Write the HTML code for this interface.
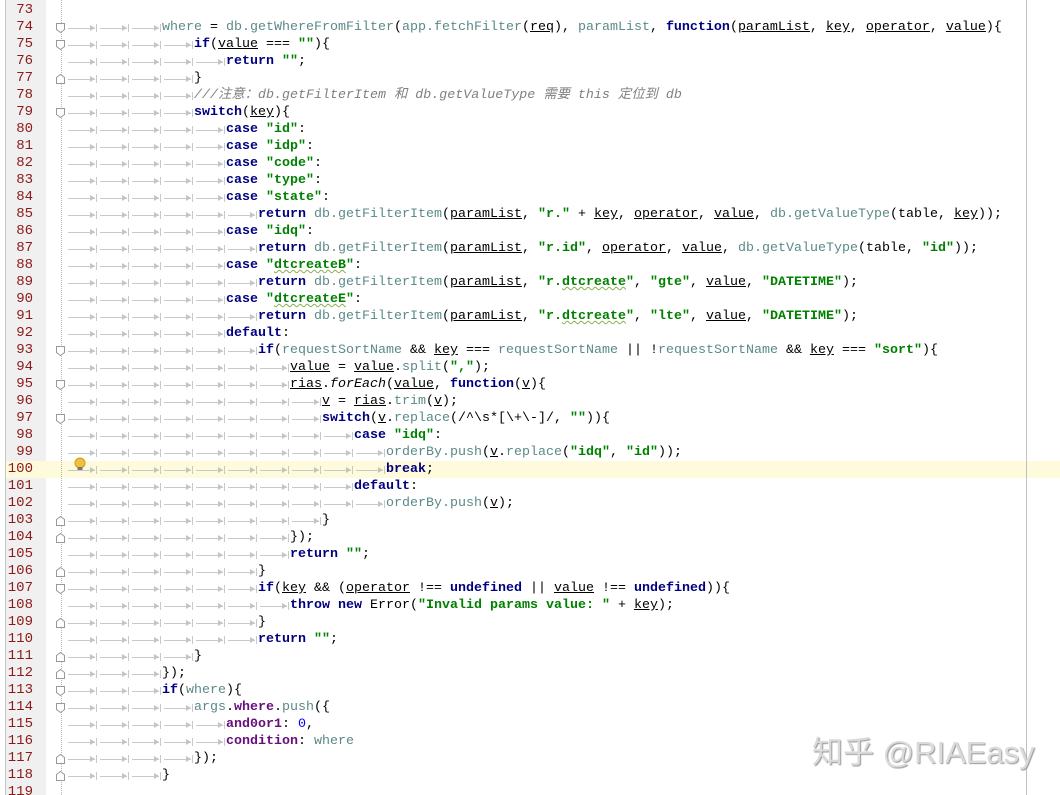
<!DOCTYPE html>
<html><head><meta charset="utf-8"><style>
html,body{margin:0;padding:0;background:#fff;width:1060px;height:795px;overflow:hidden;position:relative;font-family:"Liberation Mono","Noto Sans CJK SC",monospace;}
#gut{position:absolute;left:5px;top:0;width:40px;height:795px;background:#f0f0f0;border-left:1px solid #c8c8c8;}
#dot{position:absolute;left:61px;top:0;height:795px;border-left:1px dotted #b8b8b8;}
#rm{position:absolute;left:1026px;top:0;height:795px;border-left:1px solid #c0c0c0;}
.hl{position:absolute;left:6px;width:1054px;height:17px;background:#fdfbdc;}
.ln{position:absolute;left:4px;width:29px;text-align:right;font-size:14px;line-height:17px;color:#8c1a1a;margin-top:2px;}
.code{position:absolute;left:66px;font-size:13.33px;line-height:17px;white-space:pre;color:#000;margin-top:2px;}
.t{display:inline-block;width:32px;height:17px;vertical-align:top;position:relative;}
.t:before{content:"";position:absolute;left:2px;right:3px;top:9px;border-top:1px solid #c8c8c8;}
.t:after{content:"";position:absolute;right:1px;top:5px;height:8px;border-left:1px solid #c8c8c8;}
.t i{position:absolute;right:3px;top:6px;width:0;height:0;border-top:3px solid transparent;border-bottom:3px solid transparent;border-left:5px solid #c4c4c4;}
.k{color:#000080;font-weight:bold;}
.s{color:#008000;font-weight:bold;}
.g{color:#5b8a88;}
.p{color:#660e7a;font-weight:bold;}
.n{color:#0000ff;}
.c1{color:#808080;font-style:italic;}
.u{text-decoration:underline;}
.w{text-decoration:underline wavy #8ab04f;text-decoration-thickness:1px;}
.it{font-style:italic;}
#wm{position:absolute;left:812px;top:727px;font-family:"Liberation Sans","Noto Sans CJK SC",sans-serif;font-size:31px;color:#dadada;text-shadow:1px 1px 1px #999;}
</style></head><body>
<div id="gut"></div>
<div class="hl" style="top:461px"></div>
<div id="dot"></div>
<div id="rm"></div>
<div id="wm">知乎 @RIAEasy</div>
<svg style="position:absolute;left:73px;top:457px" width="14" height="17" viewBox="0 0 14 17"><circle cx="7" cy="6" r="5" fill="#f0c040" stroke="#d09a20"/><rect x="4.5" y="10" width="5" height="4" fill="#777"/></svg>

<div class="ln" style="top:0px">73</div>
<div class="ln" style="top:17px">74</div><div class="code" style="top:17px"><b class="t"><i></i></b><b class="t"><i></i></b><b class="t"><i></i></b><span class="g">where</span> = <span class="g">db.getWhereFromFilter</span>(<span class="g">app.fetchFilter</span>(<span class="u">req</span>), <span class="g">paramList</span>, <span class="k">function</span>(<span class="u">paramList</span>, <span class="u">key</span>, <span class="u">operator</span>, <span class="u">value</span>){</div>
<div class="ln" style="top:34px">75</div><div class="code" style="top:34px"><b class="t"><i></i></b><b class="t"><i></i></b><b class="t"><i></i></b><b class="t"><i></i></b><span class="k">if</span>(<span class="u">value</span> === <span class="s">""</span>){</div>
<div class="ln" style="top:51px">76</div><div class="code" style="top:51px"><b class="t"><i></i></b><b class="t"><i></i></b><b class="t"><i></i></b><b class="t"><i></i></b><b class="t"><i></i></b><span class="k">return</span> <span class="s">""</span>;</div>
<div class="ln" style="top:68px">77</div><div class="code" style="top:68px"><b class="t"><i></i></b><b class="t"><i></i></b><b class="t"><i></i></b><b class="t"><i></i></b>}</div>
<div class="ln" style="top:85px">78</div><div class="code" style="top:85px"><b class="t"><i></i></b><b class="t"><i></i></b><b class="t"><i></i></b><b class="t"><i></i></b><span class="c1">///注意：db.getFilterItem 和 db.getValueType 需要 this 定位到 db</span></div>
<div class="ln" style="top:102px">79</div><div class="code" style="top:102px"><b class="t"><i></i></b><b class="t"><i></i></b><b class="t"><i></i></b><b class="t"><i></i></b><span class="k">switch</span>(<span class="u">key</span>){</div>
<div class="ln" style="top:119px">80</div><div class="code" style="top:119px"><b class="t"><i></i></b><b class="t"><i></i></b><b class="t"><i></i></b><b class="t"><i></i></b><b class="t"><i></i></b><span class="k">case</span> <span class="s">"id"</span>:</div>
<div class="ln" style="top:136px">81</div><div class="code" style="top:136px"><b class="t"><i></i></b><b class="t"><i></i></b><b class="t"><i></i></b><b class="t"><i></i></b><b class="t"><i></i></b><span class="k">case</span> <span class="s">"idp"</span>:</div>
<div class="ln" style="top:153px">82</div><div class="code" style="top:153px"><b class="t"><i></i></b><b class="t"><i></i></b><b class="t"><i></i></b><b class="t"><i></i></b><b class="t"><i></i></b><span class="k">case</span> <span class="s">"code"</span>:</div>
<div class="ln" style="top:170px">83</div><div class="code" style="top:170px"><b class="t"><i></i></b><b class="t"><i></i></b><b class="t"><i></i></b><b class="t"><i></i></b><b class="t"><i></i></b><span class="k">case</span> <span class="s">"type"</span>:</div>
<div class="ln" style="top:187px">84</div><div class="code" style="top:187px"><b class="t"><i></i></b><b class="t"><i></i></b><b class="t"><i></i></b><b class="t"><i></i></b><b class="t"><i></i></b><span class="k">case</span> <span class="s">"state"</span>:</div>
<div class="ln" style="top:204px">85</div><div class="code" style="top:204px"><b class="t"><i></i></b><b class="t"><i></i></b><b class="t"><i></i></b><b class="t"><i></i></b><b class="t"><i></i></b><b class="t"><i></i></b><span class="k">return</span> <span class="g">db.getFilterItem</span>(<span class="u">paramList</span>, <span class="s">"r."</span> + <span class="u">key</span>, <span class="u">operator</span>, <span class="u">value</span>, <span class="g">db.getValueType</span>(table, <span class="u">key</span>));</div>
<div class="ln" style="top:221px">86</div><div class="code" style="top:221px"><b class="t"><i></i></b><b class="t"><i></i></b><b class="t"><i></i></b><b class="t"><i></i></b><b class="t"><i></i></b><span class="k">case</span> <span class="s">"idq"</span>:</div>
<div class="ln" style="top:238px">87</div><div class="code" style="top:238px"><b class="t"><i></i></b><b class="t"><i></i></b><b class="t"><i></i></b><b class="t"><i></i></b><b class="t"><i></i></b><b class="t"><i></i></b><span class="k">return</span> <span class="g">db.getFilterItem</span>(<span class="u">paramList</span>, <span class="s">"r.id"</span>, <span class="u">operator</span>, <span class="u">value</span>, <span class="g">db.getValueType</span>(table, <span class="s">"id"</span>));</div>
<div class="ln" style="top:255px">88</div><div class="code" style="top:255px"><b class="t"><i></i></b><b class="t"><i></i></b><b class="t"><i></i></b><b class="t"><i></i></b><b class="t"><i></i></b><span class="k">case</span> <span class="s">"<span class="w">dtcreateB</span>"</span>:</div>
<div class="ln" style="top:272px">89</div><div class="code" style="top:272px"><b class="t"><i></i></b><b class="t"><i></i></b><b class="t"><i></i></b><b class="t"><i></i></b><b class="t"><i></i></b><b class="t"><i></i></b><span class="k">return</span> <span class="g">db.getFilterItem</span>(<span class="u">paramList</span>, <span class="s">"r.<span class="w">dtcreate</span>"</span>, <span class="s">"gte"</span>, <span class="u">value</span>, <span class="s">"DATETIME"</span>);</div>
<div class="ln" style="top:289px">90</div><div class="code" style="top:289px"><b class="t"><i></i></b><b class="t"><i></i></b><b class="t"><i></i></b><b class="t"><i></i></b><b class="t"><i></i></b><span class="k">case</span> <span class="s">"<span class="w">dtcreateE</span>"</span>:</div>
<div class="ln" style="top:306px">91</div><div class="code" style="top:306px"><b class="t"><i></i></b><b class="t"><i></i></b><b class="t"><i></i></b><b class="t"><i></i></b><b class="t"><i></i></b><b class="t"><i></i></b><span class="k">return</span> <span class="g">db.getFilterItem</span>(<span class="u">paramList</span>, <span class="s">"r.<span class="w">dtcreate</span>"</span>, <span class="s">"lte"</span>, <span class="u">value</span>, <span class="s">"DATETIME"</span>);</div>
<div class="ln" style="top:323px">92</div><div class="code" style="top:323px"><b class="t"><i></i></b><b class="t"><i></i></b><b class="t"><i></i></b><b class="t"><i></i></b><b class="t"><i></i></b><span class="k">default</span>:</div>
<div class="ln" style="top:340px">93</div><div class="code" style="top:340px"><b class="t"><i></i></b><b class="t"><i></i></b><b class="t"><i></i></b><b class="t"><i></i></b><b class="t"><i></i></b><b class="t"><i></i></b><span class="k">if</span>(<span class="g">requestSortName</span> &amp;&amp; <span class="u">key</span> === <span class="g">requestSortName</span> || !<span class="g">requestSortName</span> &amp;&amp; <span class="u">key</span> === <span class="s">"sort"</span>){</div>
<div class="ln" style="top:357px">94</div><div class="code" style="top:357px"><b class="t"><i></i></b><b class="t"><i></i></b><b class="t"><i></i></b><b class="t"><i></i></b><b class="t"><i></i></b><b class="t"><i></i></b><b class="t"><i></i></b><span class="u">value</span> = <span class="u">value</span>.<span class="g">split</span>(<span class="s">","</span>);</div>
<div class="ln" style="top:374px">95</div><div class="code" style="top:374px"><b class="t"><i></i></b><b class="t"><i></i></b><b class="t"><i></i></b><b class="t"><i></i></b><b class="t"><i></i></b><b class="t"><i></i></b><b class="t"><i></i></b><span class="u">rias</span>.<span class="it">forEach</span>(<span class="u">value</span>, <span class="k">function</span>(<span class="u">v</span>){</div>
<div class="ln" style="top:391px">96</div><div class="code" style="top:391px"><b class="t"><i></i></b><b class="t"><i></i></b><b class="t"><i></i></b><b class="t"><i></i></b><b class="t"><i></i></b><b class="t"><i></i></b><b class="t"><i></i></b><b class="t"><i></i></b><span class="u">v</span> = <span class="u">rias</span>.<span class="g">trim</span>(<span class="u">v</span>);</div>
<div class="ln" style="top:408px">97</div><div class="code" style="top:408px"><b class="t"><i></i></b><b class="t"><i></i></b><b class="t"><i></i></b><b class="t"><i></i></b><b class="t"><i></i></b><b class="t"><i></i></b><b class="t"><i></i></b><b class="t"><i></i></b><span class="k">switch</span>(<span class="u">v</span>.<span class="g">replace</span>(/^\s*[\+\-]/, <span class="s">""</span>)){</div>
<div class="ln" style="top:425px">98</div><div class="code" style="top:425px"><b class="t"><i></i></b><b class="t"><i></i></b><b class="t"><i></i></b><b class="t"><i></i></b><b class="t"><i></i></b><b class="t"><i></i></b><b class="t"><i></i></b><b class="t"><i></i></b><b class="t"><i></i></b><span class="k">case</span> <span class="s">"idq"</span>:</div>
<div class="ln" style="top:442px">99</div><div class="code" style="top:442px"><b class="t"><i></i></b><b class="t"><i></i></b><b class="t"><i></i></b><b class="t"><i></i></b><b class="t"><i></i></b><b class="t"><i></i></b><b class="t"><i></i></b><b class="t"><i></i></b><b class="t"><i></i></b><b class="t"><i></i></b><span class="g">orderBy.push</span>(<span class="u">v</span>.<span class="g">replace</span>(<span class="s">"idq"</span>, <span class="s">"id"</span>));</div>
<div class="ln" style="top:459px">100</div><div class="code" style="top:459px"><b class="t"><i></i></b><b class="t"><i></i></b><b class="t"><i></i></b><b class="t"><i></i></b><b class="t"><i></i></b><b class="t"><i></i></b><b class="t"><i></i></b><b class="t"><i></i></b><b class="t"><i></i></b><b class="t"><i></i></b><span class="k">break</span>;</div>
<div class="ln" style="top:476px">101</div><div class="code" style="top:476px"><b class="t"><i></i></b><b class="t"><i></i></b><b class="t"><i></i></b><b class="t"><i></i></b><b class="t"><i></i></b><b class="t"><i></i></b><b class="t"><i></i></b><b class="t"><i></i></b><b class="t"><i></i></b><span class="k">default</span>:</div>
<div class="ln" style="top:493px">102</div><div class="code" style="top:493px"><b class="t"><i></i></b><b class="t"><i></i></b><b class="t"><i></i></b><b class="t"><i></i></b><b class="t"><i></i></b><b class="t"><i></i></b><b class="t"><i></i></b><b class="t"><i></i></b><b class="t"><i></i></b><b class="t"><i></i></b><span class="g">orderBy.push</span>(<span class="u">v</span>);</div>
<div class="ln" style="top:510px">103</div><div class="code" style="top:510px"><b class="t"><i></i></b><b class="t"><i></i></b><b class="t"><i></i></b><b class="t"><i></i></b><b class="t"><i></i></b><b class="t"><i></i></b><b class="t"><i></i></b><b class="t"><i></i></b>}</div>
<div class="ln" style="top:527px">104</div><div class="code" style="top:527px"><b class="t"><i></i></b><b class="t"><i></i></b><b class="t"><i></i></b><b class="t"><i></i></b><b class="t"><i></i></b><b class="t"><i></i></b><b class="t"><i></i></b>});</div>
<div class="ln" style="top:544px">105</div><div class="code" style="top:544px"><b class="t"><i></i></b><b class="t"><i></i></b><b class="t"><i></i></b><b class="t"><i></i></b><b class="t"><i></i></b><b class="t"><i></i></b><b class="t"><i></i></b><span class="k">return</span> <span class="s">""</span>;</div>
<div class="ln" style="top:561px">106</div><div class="code" style="top:561px"><b class="t"><i></i></b><b class="t"><i></i></b><b class="t"><i></i></b><b class="t"><i></i></b><b class="t"><i></i></b><b class="t"><i></i></b>}</div>
<div class="ln" style="top:578px">107</div><div class="code" style="top:578px"><b class="t"><i></i></b><b class="t"><i></i></b><b class="t"><i></i></b><b class="t"><i></i></b><b class="t"><i></i></b><b class="t"><i></i></b><span class="k">if</span>(<span class="u">key</span> &amp;&amp; (<span class="u">operator</span> !== <span class="k">undefined</span> || <span class="u">value</span> !== <span class="k">undefined</span>)){</div>
<div class="ln" style="top:595px">108</div><div class="code" style="top:595px"><b class="t"><i></i></b><b class="t"><i></i></b><b class="t"><i></i></b><b class="t"><i></i></b><b class="t"><i></i></b><b class="t"><i></i></b><b class="t"><i></i></b><span class="k">throw new</span> Error(<span class="s">"Invalid params value: "</span> + <span class="u">key</span>);</div>
<div class="ln" style="top:612px">109</div><div class="code" style="top:612px"><b class="t"><i></i></b><b class="t"><i></i></b><b class="t"><i></i></b><b class="t"><i></i></b><b class="t"><i></i></b><b class="t"><i></i></b>}</div>
<div class="ln" style="top:629px">110</div><div class="code" style="top:629px"><b class="t"><i></i></b><b class="t"><i></i></b><b class="t"><i></i></b><b class="t"><i></i></b><b class="t"><i></i></b><b class="t"><i></i></b><span class="k">return</span> <span class="s">""</span>;</div>
<div class="ln" style="top:646px">111</div><div class="code" style="top:646px"><b class="t"><i></i></b><b class="t"><i></i></b><b class="t"><i></i></b><b class="t"><i></i></b>}</div>
<div class="ln" style="top:663px">112</div><div class="code" style="top:663px"><b class="t"><i></i></b><b class="t"><i></i></b><b class="t"><i></i></b>});</div>
<div class="ln" style="top:680px">113</div><div class="code" style="top:680px"><b class="t"><i></i></b><b class="t"><i></i></b><b class="t"><i></i></b><span class="k">if</span>(<span class="g">where</span>){</div>
<div class="ln" style="top:697px">114</div><div class="code" style="top:697px"><b class="t"><i></i></b><b class="t"><i></i></b><b class="t"><i></i></b><b class="t"><i></i></b><span class="g">args</span>.<span class="p">where</span>.<span class="g">push</span>({</div>
<div class="ln" style="top:714px">115</div><div class="code" style="top:714px"><b class="t"><i></i></b><b class="t"><i></i></b><b class="t"><i></i></b><b class="t"><i></i></b><b class="t"><i></i></b><span class="p">and0or1</span>: <span class="n">0</span>,</div>
<div class="ln" style="top:731px">116</div><div class="code" style="top:731px"><b class="t"><i></i></b><b class="t"><i></i></b><b class="t"><i></i></b><b class="t"><i></i></b><b class="t"><i></i></b><span class="p">condition</span>: <span class="g">where</span></div>
<div class="ln" style="top:748px">117</div><div class="code" style="top:748px"><b class="t"><i></i></b><b class="t"><i></i></b><b class="t"><i></i></b><b class="t"><i></i></b>});</div>
<div class="ln" style="top:765px">118</div><div class="code" style="top:765px"><b class="t"><i></i></b><b class="t"><i></i></b><b class="t"><i></i></b>}</div>
<div class="ln" style="top:782px">119</div>

<svg style="position:absolute;left:0;top:2px" width="70" height="795">
<g fill="#fff" stroke="#999" stroke-width="1">
<path d="M56.5 21.5h8v6l-4 3l-4-3z"/><path d="M56.5 38.5h8v6l-4 3l-4-3z"/>
<path d="M56.5 106.5h8v6l-4 3l-4-3z"/><path d="M56.5 344.5h8v6l-4 3l-4-3z"/>
<path d="M56.5 378.5h8v6l-4 3l-4-3z"/><path d="M56.5 412.5h8v6l-4 3l-4-3z"/>
<path d="M56.5 582.5h8v6l-4 3l-4-3z"/><path d="M56.5 684.5h8v6l-4 3l-4-3z"/>
<path d="M56.5 701.5h8v6l-4 3l-4-3z"/>
<path d="M56.5 81.5h8v-6l-4-3l-4 3z"/><path d="M56.5 523.5h8v-6l-4-3l-4 3z"/>
<path d="M56.5 540.5h8v-6l-4-3l-4 3z"/><path d="M56.5 574.5h8v-6l-4-3l-4 3z"/>
<path d="M56.5 625.5h8v-6l-4-3l-4 3z"/><path d="M56.5 659.5h8v-6l-4-3l-4 3z"/>
<path d="M56.5 676.5h8v-6l-4-3l-4 3z"/><path d="M56.5 761.5h8v-6l-4-3l-4 3z"/>
<path d="M56.5 778.5h8v-6l-4-3l-4 3z"/>
</g>
</svg>
</body></html>
